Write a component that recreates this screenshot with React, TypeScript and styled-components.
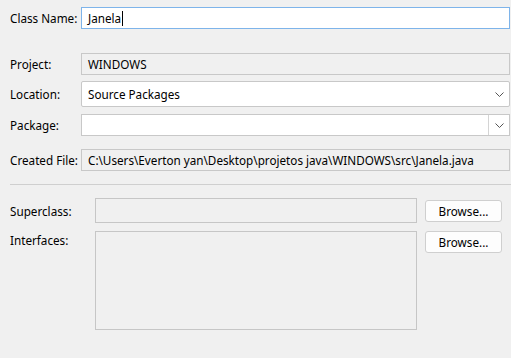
import React from 'react';
import styled, { createGlobalStyle } from 'styled-components';

const GlobalStyle = createGlobalStyle`
  html, body {
    margin: 0;
    padding: 0;
    background: #f0f0f0;
  }
  body {
    font-family: 'Noto Sans', 'Open Sans', sans-serif;
    font-size: 11.7px;
    color: #000;
  }
`;

const Chevron: React.FC = () => (
  <svg width="9" height="5" viewBox="0 0 9 5">
    <path d="M0.5 0.5 L4.5 4.5 L8.5 0.5" fill="none" stroke="#555" strokeWidth="1" />
  </svg>
);

const App: React.FC = () => {
  return (
    <Page>
      <GlobalStyle />
      <TopForm>
        <Label>Class Name:</Label>
        <TextField $focused>
          Janela<Caret />
        </TextField>

        <Label $gap={24}>Project:</Label>
        <ReadOnlyField $gap={24}>WINDOWS</ReadOnlyField>

        <Label $gap={6}>Location:</Label>
        <Combo $gap={6}>
          <ComboText>Source Packages</ComboText>
          <ComboArrow>
            <Chevron />
          </ComboArrow>
        </Combo>

        <Label $gap={7}>Package:</Label>
        <EditCombo $gap={7}>
          <EditText />
          <EditButton>
            <Chevron />
          </EditButton>
        </EditCombo>

        <Label $gap={13}>Created File:</Label>
        <ReadOnlyField $gap={13}>
          C:\Users\Everton yan\Desktop\projetos java\WINDOWS\src\Janela.java
        </ReadOnlyField>
      </TopForm>

      <Separator />

      <BottomForm>
        <Label>Superclass:</Label>
        <DisabledBox $height={25} />
        <BrowseButton>Browse...</BrowseButton>

        <Label $top>Interfaces:</Label>
        <DisabledBox $height={99} />
        <BrowseButton $top>Browse...</BrowseButton>
      </BottomForm>
    </Page>
  );
};

const Page = styled.div`
  width: 511px;
  height: 358px;
  box-sizing: border-box;
  padding-top: 7px;
  overflow: hidden;
`;

const TopForm = styled.div`
  display: grid;
  grid-template-columns: 71px 1fr;
  align-items: center;
  padding: 0 1px 0 10px;
`;

const Label = styled.div<{ $gap?: number; $top?: boolean }>`
  margin-top: ${(p) => p.$gap ?? 0}px;
  align-self: ${(p) => (p.$top ? 'start' : 'center')};
  padding-top: ${(p) => (p.$top ? 1 : 0)}px;
  white-space: nowrap;
  line-height: 16px;
`;

const fieldBase = `
  box-sizing: border-box;
  display: flex;
  align-items: center;
  white-space: nowrap;
  overflow: hidden;
`;

const TextField = styled.div<{ $focused?: boolean }>`
  ${fieldBase}
  height: 22px;
  padding-left: 6px;
  background: #fff;
  border: 1px solid ${(p) => (p.$focused ? '#7eb4ea' : '#c4c4c4')};
`;

const Caret = styled.span`
  display: inline-block;
  width: 1px;
  height: 15px;
  background: #000;
  margin-left: 1px;
`;

const ReadOnlyField = styled.div<{ $gap?: number }>`
  ${fieldBase}
  margin-top: ${(p) => p.$gap ?? 0}px;
  height: 22px;
  padding-left: 6px;
  background: #f0f0f0;
  border: 1px solid #c8c8c8;
`;

const Combo = styled.div<{ $gap?: number }>`
  ${fieldBase}
  margin-top: ${(p) => p.$gap ?? 0}px;
  height: 26px;
  background: #fff;
  border: 1px solid #c8c8c8;
  border-radius: 2px;
`;

const ComboText = styled.span`
  flex: 1;
  padding-left: 6px;
`;

const ComboArrow = styled.span`
  width: 20px;
  display: flex;
  justify-content: center;
  align-items: center;
  padding-top: 1px;
`;

const EditCombo = styled.div<{ $gap?: number }>`
  ${fieldBase}
  margin-top: ${(p) => p.$gap ?? 0}px;
  height: 22px;
  background: #fff;
  border: 1px solid #c8c8c8;
  align-items: stretch;
`;

const EditText = styled.span`
  flex: 1;
`;

const EditButton = styled.span`
  width: 20px;
  border-left: 1px solid #d4d4d4;
  display: flex;
  justify-content: center;
  align-items: center;
`;

const Separator = styled.div`
  margin: 13px 0 0 10px;
  height: 1px;
  background: #cfcfcf;
`;

const BottomForm = styled.div`
  display: grid;
  grid-template-columns: 77px 322px 77px;
  column-gap: 8px;
  row-gap: 8px;
  align-items: center;
  padding: 13px 9px 0 10px;
`;

const DisabledBox = styled.div<{ $height: number }>`
  box-sizing: border-box;
  height: ${(p) => p.$height}px;
  border: 1px solid #c6c6c6;
  background: #f0f0f0;
`;

const BrowseButton = styled.button<{ $top?: boolean }>`
  align-self: ${(p) => (p.$top ? 'start' : 'center')};
  height: 22px;
  padding: 0;
  font: inherit;
  color: #000;
  background: #fdfdfd;
  border: 1px solid #cfcfcf;
  border-radius: 3px;
  line-height: 18px;
`;

export default App;
